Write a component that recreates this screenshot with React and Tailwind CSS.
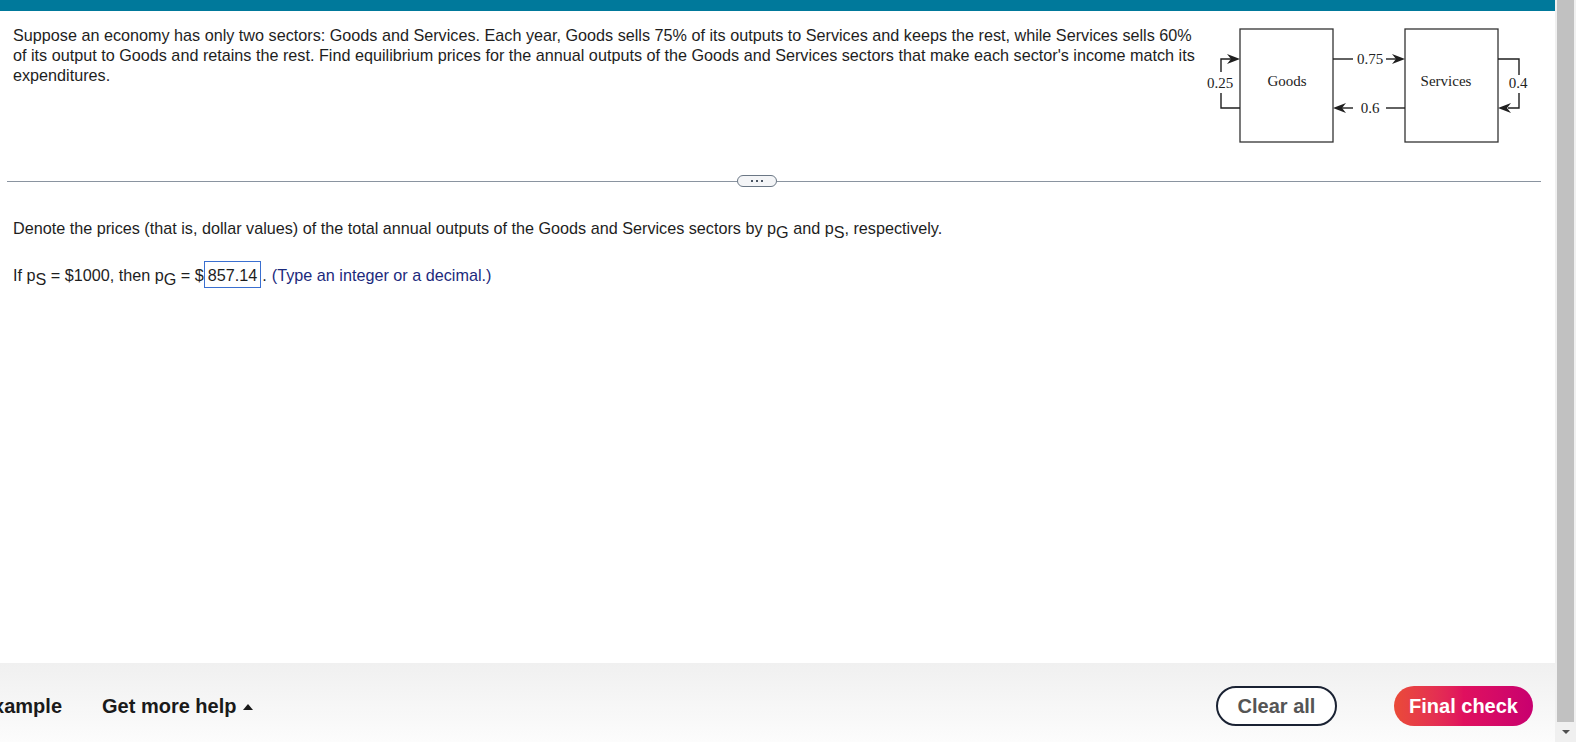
import React from 'react';

const ink = '#1f1f1f';

function Head({ x, y, dir }) {
  // notched arrowhead, tip at (x, y)
  const d = dir === 'right'
    ? `M${x} ${y} L${x - 13} ${y - 5} L${x - 9} ${y} L${x - 13} ${y + 5} Z`
    : `M${x} ${y} L${x + 13} ${y - 5} L${x + 9} ${y} L${x + 13} ${y + 5} Z`;
  return <path d={d} fill={ink} />;
}

function Diagram() {
  return (
    <svg width="345" height="130" viewBox="1192 20 345 130" className="shrink-0" style={{ fontFamily: '"Liberation Serif", serif' }}>
      <g stroke="#333" strokeWidth="1.3" fill="white">
        <rect x="1240" y="29" width="93" height="113" />
        <rect x="1405" y="29" width="93" height="113" />
      </g>
      <g stroke={ink} strokeWidth="1.4" fill="none">
        {/* goods self loop */}
        <path d="M1232 59 L1221 59 L1221 72" />
        <path d="M1221 93 L1221 108 L1240 108" />
        {/* goods -> services */}
        <path d="M1333 59 L1353 59" />
        <path d="M1386 59 L1396 59" />
        {/* services -> goods */}
        <path d="M1342 108 L1353 108" />
        <path d="M1386 108 L1405 108" />
        {/* services self loop */}
        <path d="M1498 59 L1519 59 L1519 75" />
        <path d="M1519 93 L1519 108 L1508 108" />
      </g>
      <Head x={1240} y={59} dir="right" />
      <Head x={1405} y={59} dir="right" />
      <Head x={1333} y={108} dir="left" />
      <Head x={1498} y={108} dir="left" />
      <g fontSize="15" fill="#222" textAnchor="middle">
        <text x="1287" y="86">Goods</text>
        <text x="1446" y="86">Services</text>
        <text x="1220" y="88">0.25</text>
        <text x="1370" y="64">0.75</text>
        <text x="1370" y="113">0.6</text>
        <text x="1518" y="88">0.4</text>
      </g>
    </svg>
  );
}

function Sub({ children }) {
  return <span className="relative top-[4px]">{children}</span>;
}

export default function App() {
  return (
    <div className="relative w-[1576px] h-[742px] overflow-hidden bg-white text-[16.2px] text-[#1e1e1e]" style={{ fontFamily: '"Liberation Sans", Arial, sans-serif' }}>
      <div className="flex h-full">
        <div className="flex flex-col w-[1555px] shrink-0 h-full">
          <div className="h-[11px] bg-[#00799b] shrink-0" />

          {/* question stem and diagram */}
          <div className="flex pl-[13px] pt-[14px] h-[157px]">
            <p className="w-[1192px] shrink-0 leading-[20px]">
              Suppose an economy has only two sectors: Goods and Services. Each year, Goods sells 75% of its outputs to Services and keeps the rest, while Services sells 60% of its output to Goods and retains the rest. Find equilibrium prices for the annual outputs of the Goods and Services sectors that make each sector&apos;s income match its expenditures.
            </p>
            <div className="-mt-[5px] -ml-[13px]">
              <Diagram />
            </div>
          </div>

          {/* divider */}
          <div className="flex items-center pl-[7px] pr-[14px] h-[26px]">
            <div className="w-[730px] shrink-0 h-px bg-[#8a94a0]" />
            <div className="flex shrink-0 items-center justify-center gap-[3px] w-[40px] h-[12px] rounded-full border border-[#6b7785] bg-[#f4f5f7]">
              <span className="w-[2px] h-[2px] bg-[#4a5563]" />
              <span className="w-[2px] h-[2px] bg-[#4a5563]" />
              <span className="w-[2px] h-[2px] bg-[#4a5563]" />
            </div>
            <div className="flex-1 h-px bg-[#8a94a0]" />
          </div>

          {/* answer part */}
          <div className="pl-[13px] pt-[24px] flex-1">
            <p className="leading-[20px]">
              Denote the prices (that is, dollar values) of the total annual outputs of the Goods and Services sectors by p<Sub>G</Sub> and p<Sub>S</Sub>, respectively.
            </p>
            <div className="flex items-center mt-[23px] h-[27px] leading-[20px]">
              <span>If p<Sub>S</Sub> = $1000, then p<Sub>G</Sub> = $</span>
              <span className="flex items-center h-[27px] px-[3px] border border-[#3a6fd0] text-[#1e1e1e]">857.14</span>
              <span className="ml-[1px]">.</span>
              <span className="ml-[5px] text-[#1c2a7c]">(Type an integer or a decimal.)</span>
            </div>
          </div>

          {/* footer */}
          <div className="h-[79px] shrink-0 flex items-center bg-gradient-to-b from-[#f0f0f0] to-[#fcfcfc] pt-[7px]">
            <div className="w-[62px] overflow-hidden flex justify-end shrink-0">
              <span className="text-[20px] font-bold text-[#1a1a1a] whitespace-nowrap">Example</span>
            </div>
            <div className="ml-[40px] flex items-center gap-[7px] text-[20px] font-bold text-[#1a1a1a]">
              Get more help
              <span className="w-0 h-0 border-l-[5px] border-r-[5px] border-b-[6px] border-l-transparent border-r-transparent border-b-[#1a1a1a] mt-[2px]" />
            </div>
            <div className="flex-1" />
            <button className="w-[121px] h-[40px] rounded-full border-2 border-[#1a2233] bg-white text-[20px] font-bold text-[#555]">
              Clear all
            </button>
            <button className="ml-[57px] mr-[22px] w-[139px] h-[40px] rounded-full bg-gradient-to-r from-[#ea4a37] via-[#e0105e] to-[#c8006f] text-[20px] font-bold text-white">
              Final check
            </button>
          </div>
        </div>

        {/* scrollbar */}
        <div className="w-[21px] shrink-0 h-full bg-[#f0f0f0] flex flex-col items-center">
          <div className="w-[17px] flex-1 bg-[#c1c1c1]" />
          <div className="h-[20px] flex items-center justify-center">
            <span className="w-0 h-0 border-l-[4px] border-r-[4px] border-t-[4px] border-l-transparent border-r-transparent border-t-[#505050]" />
          </div>
        </div>
      </div>
    </div>
  );
}
